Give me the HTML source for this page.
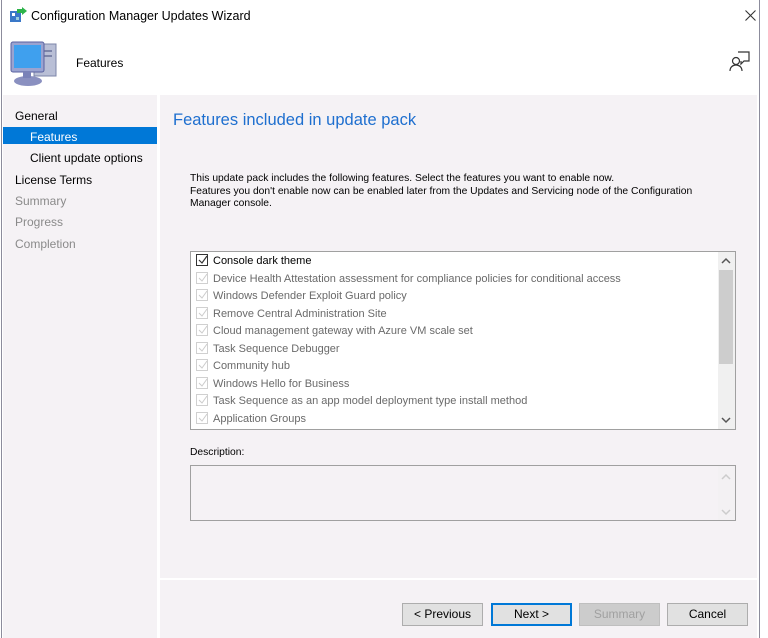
<!DOCTYPE html>
<html><head><style>
*{margin:0;padding:0;box-sizing:border-box}
body{width:768px;height:638px;background:#fff;font-family:"Liberation Sans",sans-serif;position:relative;overflow:hidden}
.abs{position:absolute}
.win{left:1px;top:0;width:759px;height:638px;border-left:1px solid #8c8c9c;border-right:1px solid #8c8c9c;background:#fff}
.side{left:3px;top:95px;width:154px;height:543px;background:#f5f2f5}
.main{left:160px;top:95px;width:597px;height:483px;background:#f5f2f5}
.foot{left:160px;top:580px;width:597px;height:58px;background:#f5f2f5}
.nav{position:absolute;font-size:12px;color:#000;left:12px}
.dis{color:#8a8a8a}
.item{position:absolute;left:5px;font-size:11px;color:#6a6a6a;height:17px;line-height:17px}
.cb{display:inline-block;width:12px;height:12px;border:1px solid #d0d0d0;vertical-align:-2px;margin-right:5px;position:relative}
.cb svg{position:absolute;left:0;top:0}
.btn{position:absolute;top:603px;height:23px;border:1px solid #adadad;background:#e1e1e1;font-size:12px;text-align:center;line-height:21px;color:#000}
</style></head><body>
<div class="abs win"></div>
<svg class="abs" style="left:9px;top:7px" width="18" height="18" viewBox="0 0 18 18"><rect x="1" y="4" width="11" height="11" fill="#3a78c8"/><rect x="3" y="6" width="3" height="3" fill="#fff"/><rect x="7" y="10" width="3" height="3" fill="#9cd"/><path d="M8 2h5V0l5 4-5 4V6H8z" fill="#2db34a"/></svg>
<div class="abs" style="left:31px;top:9px;font-size:12.5px;color:#000">Configuration Manager Updates Wizard</div>
<svg class="abs" style="left:745px;top:10px" width="11" height="11"><path d="M0.5 0.5l10 10M10.5 0.5l-10 10" stroke="#333" stroke-width="1.1"/></svg>
<svg class="abs" style="left:8px;top:40px" width="52" height="48" viewBox="0 0 52 48"><rect x="26" y="4" width="22" height="32" fill="#b9bfd6" stroke="#7c84a8"/><rect x="30" y="10" width="14" height="2" fill="#7c84a8"/><rect x="30" y="15" width="14" height="2" fill="#7c84a8"/><ellipse cx="20" cy="41" rx="14" ry="5" fill="#8a90c0"/><rect x="3" y="2" width="33" height="30" rx="2" fill="#9aa3d0" stroke="#5a62a0"/><rect x="6" y="5" width="27" height="23" fill="#3fa0ee"/><rect x="15" y="32" width="8" height="6" fill="#7a82b8"/></svg>
<div class="abs" style="left:76px;top:56px;font-size:12px">Features</div>
<svg class="abs" style="left:729px;top:50px" width="22" height="22" viewBox="0 0 22 22" fill="none" stroke="#333" stroke-width="1.2"><path d="M9 2h11v9h-5l-3 3v-3"/><circle cx="7" cy="11" r="3.5"/><path d="M1 21c0-4 3-6 6-6s6 2 6 6"/></svg>
<div class="abs side"></div>
<div class="abs main"></div>
<div class="abs foot"></div>
<div class="nav" style="left:15px;top:109px">General</div>
<div class="abs" style="left:3px;top:127px;width:154px;height:17px;background:#0078d7"></div>
<div class="nav" style="left:30px;top:130px;color:#fff">Features</div>
<div class="nav" style="left:30px;top:151px">Client update options</div>
<div class="nav" style="left:15px;top:173px">License Terms</div>
<div class="nav dis" style="left:15px;top:194px">Summary</div>
<div class="nav dis" style="left:15px;top:215px">Progress</div>
<div class="nav dis" style="left:15px;top:237px">Completion</div>
<div class="abs" style="left:173px;top:111px;font-size:16.5px;color:#1e6fcf">Features included in update pack</div>
<div class="abs" style="left:190px;top:173px;font-size:10.3px;line-height:12.5px;color:#000;width:540px">This update pack includes the following features. Select the features you want to enable now.<br>Features you don't enable now can be enabled later from the Updates and Servicing node of the Configuration<br>Manager console.</div>
<div class="abs" style="left:190px;top:251px;width:546px;height:179px;background:#fff;border:1px solid #a0a0a0">
<div class="item" style="top:1px;color:#000"><span class="cb" style="border-color:#333"><svg width="11" height="11"><path d="M2 5l3 3 5-7" stroke="#333" fill="none" stroke-width="1.2"/></svg></span>Console dark theme</div>
<div class="item" style="top:18.5px"><span class="cb"><svg width="11" height="11"><path d="M2 5l3 3 5-7" stroke="#ccc" fill="none"/></svg></span>Device Health Attestation assessment for compliance policies for conditional access</div>
<div class="item" style="top:36px"><span class="cb"><svg width="11" height="11"><path d="M2 5l3 3 5-7" stroke="#ccc" fill="none"/></svg></span>Windows Defender Exploit Guard policy</div>
<div class="item" style="top:53.5px"><span class="cb"><svg width="11" height="11"><path d="M2 5l3 3 5-7" stroke="#ccc" fill="none"/></svg></span>Remove Central Administration Site</div>
<div class="item" style="top:71px"><span class="cb"><svg width="11" height="11"><path d="M2 5l3 3 5-7" stroke="#ccc" fill="none"/></svg></span>Cloud management gateway with Azure VM scale set</div>
<div class="item" style="top:88.5px"><span class="cb"><svg width="11" height="11"><path d="M2 5l3 3 5-7" stroke="#ccc" fill="none"/></svg></span>Task Sequence Debugger</div>
<div class="item" style="top:106px"><span class="cb"><svg width="11" height="11"><path d="M2 5l3 3 5-7" stroke="#ccc" fill="none"/></svg></span>Community hub</div>
<div class="item" style="top:123.5px"><span class="cb"><svg width="11" height="11"><path d="M2 5l3 3 5-7" stroke="#ccc" fill="none"/></svg></span>Windows Hello for Business</div>
<div class="item" style="top:141px"><span class="cb"><svg width="11" height="11"><path d="M2 5l3 3 5-7" stroke="#ccc" fill="none"/></svg></span>Task Sequence as an app model deployment type install method</div>
<div class="item" style="top:158.5px"><span class="cb"><svg width="11" height="11"><path d="M2 5l3 3 5-7" stroke="#ccc" fill="none"/></svg></span>Application Groups</div>
<div class="abs" style="left:527px;top:0;width:17px;height:177px;background:#f0f0f0"></div>
<div class="abs" style="left:528px;top:18px;width:14px;height:94px;background:#cdcdcd"></div>
<svg class="abs" style="left:530px;top:5px" width="10" height="8"><path d="M1 6l4-4 4 4" stroke="#555" fill="none" stroke-width="1.5"/></svg>
<svg class="abs" style="left:530px;top:164px" width="10" height="8"><path d="M1 2l4 4 4-4" stroke="#555" fill="none" stroke-width="1.5"/></svg>
</div>
<div class="abs" style="left:190px;top:447px;font-size:10.3px">Description:</div>
<div class="abs" style="left:190px;top:465px;width:546px;height:56px;background:#f5f2f5;border:1px solid #a0a0a0">
<div class="abs" style="left:527px;top:0;width:17px;height:54px;background:#f3f1f3"></div>
<svg class="abs" style="left:530px;top:7px" width="10" height="8"><path d="M1 6l4-4 4 4" stroke="#ccc" fill="none" stroke-width="1.5"/></svg>
<svg class="abs" style="left:530px;top:42px" width="10" height="8"><path d="M1 2l4 4 4-4" stroke="#ccc" fill="none" stroke-width="1.5"/></svg>
</div>
<div class="btn" style="left:402px;width:81px">&lt; Previous</div>
<div class="btn" style="left:491px;width:81px;border:1px solid #0078d7;box-shadow:inset 0 0 0 1px #0078d7">Next &gt;</div>
<div class="btn" style="left:579px;width:81px;background:#ccc;border-color:#bfbfbf;color:#a0a0a0">Summary</div>
<div class="btn" style="left:667px;width:81px">Cancel</div>
</body></html>
